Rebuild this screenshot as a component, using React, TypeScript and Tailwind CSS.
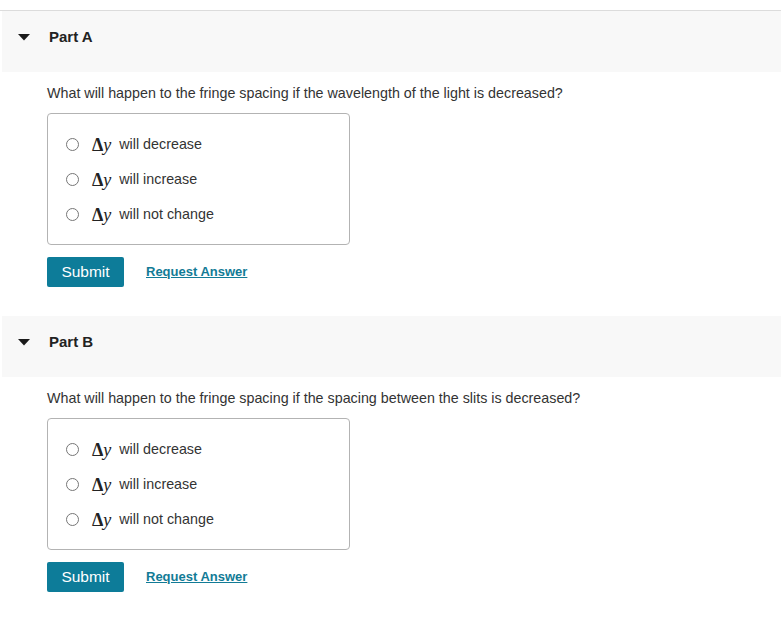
import React from "react";

const options = ["will decrease", "will increase", "will not change"];

function Part({ label, question, first }: { label: string; question: string; first?: boolean }) {
  return (
    <div className={first ? "" : "mt-[29px]"}>
      <div className="ml-[2px] h-[61px] bg-[#f8f8f8] flex items-start pt-[16px]">
        <svg width="12" height="7" viewBox="0 0 12 7" className="ml-[16px] mt-[7px]">
          <polygon points="0,0 12,0 6,6.5" fill="#1a1a1a" />
        </svg>
        <span className="ml-[19px] text-[15px] leading-[20px] font-bold text-[#222]">{label}</span>
      </div>
      <div className="pl-[47px]">
        <p className="mt-[11px] text-[14.3px] leading-[20px] text-[#333]">{question}</p>
        <div className="mt-[10px] w-[303px] border border-[#b3b3b3] rounded-[4px] pt-[13px] pb-[12px]">
          {options.map((o) => (
            <div key={o} className="h-[35px] flex items-center pl-[18px]">
              <span className="w-[13px] h-[13px] rounded-full border border-[#767676] bg-white inline-block" />
              <span className="ml-[13px] text-[18px] leading-[20px] text-[#222]" style={{ fontFamily: '"Liberation Serif", "DejaVu Serif", serif' }}>
                <span className="font-semibold">Δ</span><span className="italic">y</span>
              </span>
              <span className="ml-[8px] text-[14.3px] text-[#333]">{o}</span>
            </div>
          ))}
        </div>
        <div className="mt-[12px] flex items-center">
          <button className="w-[77px] h-[30px] bg-[#0d7c99] text-white text-[15.5px] rounded-[2px]">Submit</button>
          <a className="ml-[22px] text-[13px] font-bold text-[#127b96] underline">Request Answer</a>
        </div>
      </div>
    </div>
  );
}

export default function App() {
  return (
    <div className="w-[781px] h-[618px] bg-white overflow-hidden" style={{ fontFamily: '"Liberation Sans", Arial, sans-serif' }}>
      <div className="mt-[10px] border-t border-[#dcdcdc]">
        <Part first label="Part A" question="What will happen to the fringe spacing if the wavelength of the light is decreased?" />
        <Part label="Part B" question="What will happen to the fringe spacing if the spacing between the slits is decreased?" />
      </div>
    </div>
  );
}
